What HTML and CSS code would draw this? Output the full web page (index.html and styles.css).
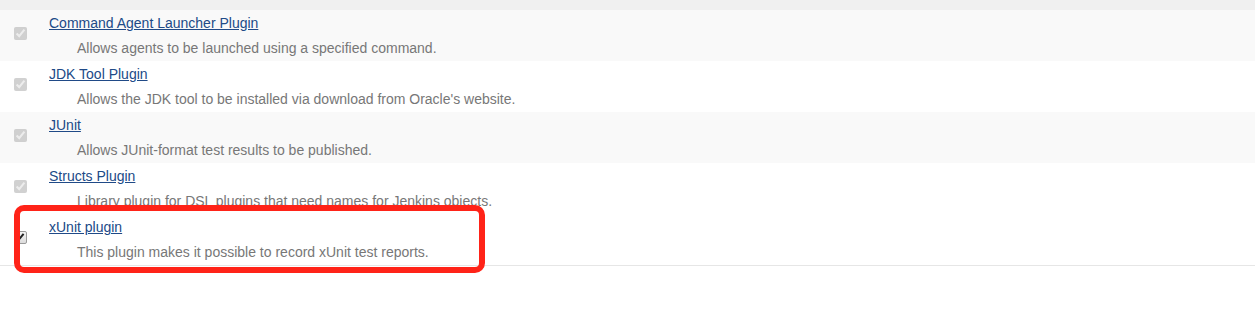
FILE: index.html
```html
<!DOCTYPE html>
<html>
<head>
<meta charset="utf-8">
<link rel="stylesheet" href="styles.css">
</head>
<body>
<div class="page">
  <div class="topbar"></div>
  <div class="list">
    <div class="row alt">
      <div class="check"><input type="checkbox" checked disabled></div>
      <div class="info">
        <a class="name" href="#">Command Agent Launcher Plugin</a>
        <div class="desc">Allows agents to be launched using a specified command.</div>
      </div>
    </div>
    <div class="row">
      <div class="check"><input type="checkbox" checked disabled></div>
      <div class="info">
        <a class="name" href="#">JDK Tool Plugin</a>
        <div class="desc">Allows the JDK tool to be installed via download from Oracle's website.</div>
      </div>
    </div>
    <div class="row alt">
      <div class="check"><input type="checkbox" checked disabled></div>
      <div class="info">
        <a class="name" href="#">JUnit</a>
        <div class="desc">Allows JUnit-format test results to be published.</div>
      </div>
    </div>
    <div class="row">
      <div class="check"><input type="checkbox" checked disabled></div>
      <div class="info">
        <a class="name" href="#">Structs Plugin</a>
        <div class="desc">Library plugin for DSL plugins that need names for Jenkins objects.</div>
      </div>
    </div>
    <div class="row last">
      <div class="check"><input class="active" type="checkbox" checked></div>
      <div class="info">
        <a class="name" href="#">xUnit plugin</a>
        <div class="desc">This plugin makes it possible to record xUnit test reports.</div>
      </div>
    </div>
  </div>
  <div class="highlight"></div>
</div>
</body>
</html>
```

FILE: styles.css
```css
html, body {
  margin: 0;
  padding: 0;
  background: #ffffff;
}
body {
  font-family: "Liberation Sans", Arial, sans-serif;
  font-size: 14px;
  color: #333;
}
.page {
  position: relative;
  width: 1255px;
  height: 333px;
  overflow: hidden;
}
.topbar {
  height: 10px;
  background: #f0f0f0;
}
.list {
  display: flex;
  flex-direction: column;
}
.row {
  display: flex;
  height: 51px;
  box-sizing: border-box;
  background: #ffffff;
}
.row.alt {
  background: #f9f9f9;
}
.row.last {
  border-bottom: 1px solid #e6e6e6;
  height: 52px;
}
.check {
  width: 49px;
  box-sizing: border-box;
  padding-left: 14px;
  padding-top: 17px;
}
.check input {
  margin: 0;
  width: 13px;
  height: 13px;
}
.check input.active {
  appearance: none;
  -webkit-appearance: none;
  box-sizing: border-box;
  border: 1px solid #9a9a9a;
  border-radius: 2px;
  background: linear-gradient(#f4f4f4, #dcdcdc);
  position: relative;
}
.check input.active::after {
  content: "";
  position: absolute;
  left: 5px;
  top: 1px;
  width: 2px;
  height: 8px;
  background: #222;
  transform: rotate(40deg);
}
.info {
  display: flex;
  flex-direction: column;
  align-items: flex-start;
  padding-top: 4px;
}
.name {
  color: #204a87;
  text-decoration: underline;
  line-height: 18px;
}
.desc {
  color: #777777;
  line-height: 18px;
  margin-top: 7px;
  padding-left: 28px;
}
.highlight {
  position: absolute;
  left: 14px;
  top: 205px;
  width: 471px;
  height: 68px;
  box-sizing: border-box;
  border: 6px solid #ff2318;
  border-radius: 10px;
}
```
